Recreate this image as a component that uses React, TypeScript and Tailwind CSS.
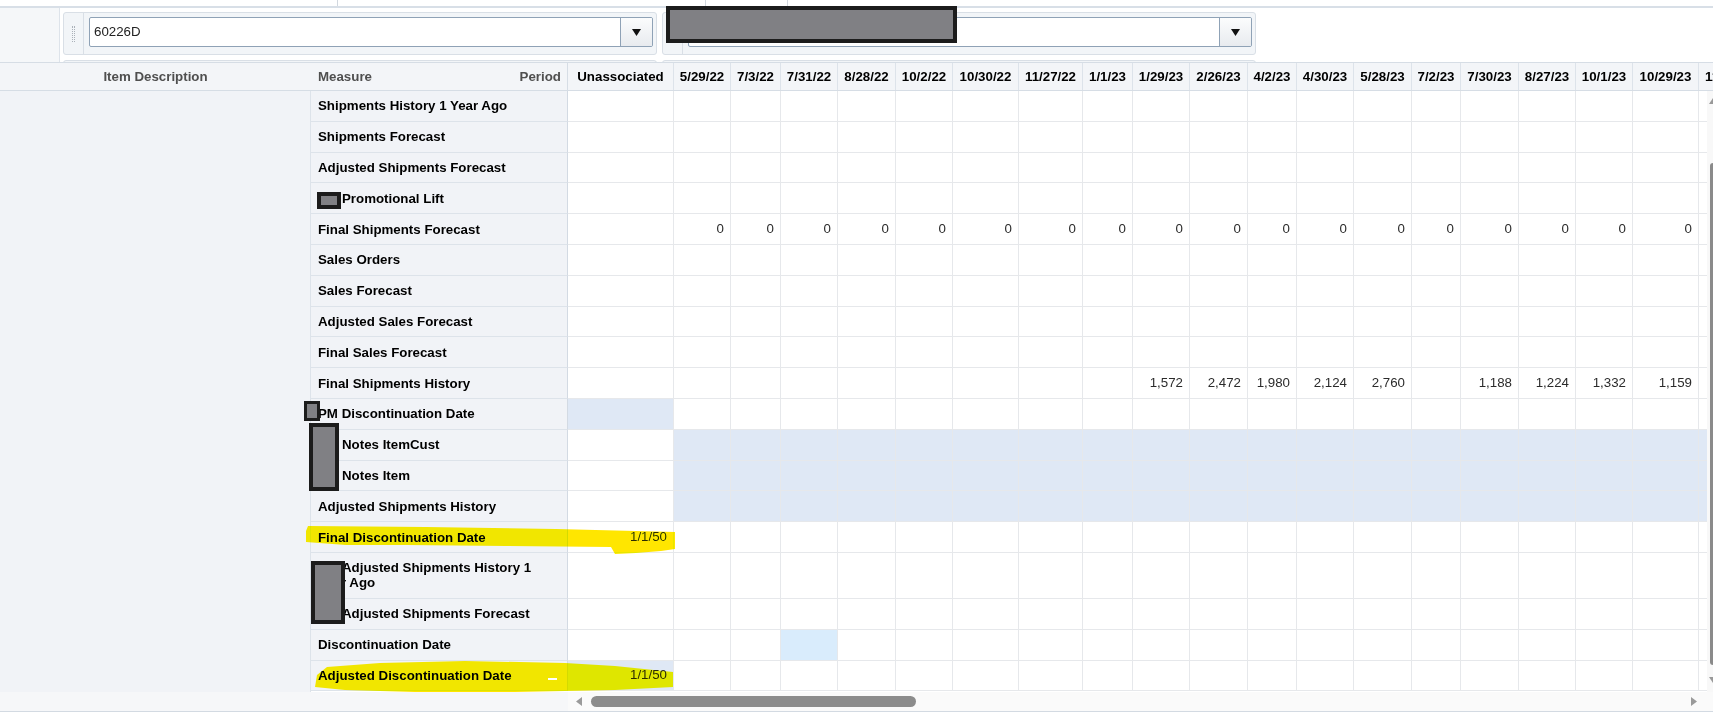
import clsx from 'clsx';

type Col = { label: string; w: string };

// period columns of the grid; the last one runs off the right edge
const COLS: Col[] = [
  { label: 'Unassociated', w: 'w-[106px]' },
  { label: '5/29/22', w: 'w-[57px]' },
  { label: '7/3/22', w: 'w-[50px]' },
  { label: '7/31/22', w: 'w-[57px]' },
  { label: '8/28/22', w: 'w-[58px]' },
  { label: '10/2/22', w: 'w-[57px]' },
  { label: '10/30/22', w: 'w-[66px]' },
  { label: '11/27/22', w: 'w-[64px]' },
  { label: '1/1/23', w: 'w-[50px]' },
  { label: '1/29/23', w: 'w-[57px]' },
  { label: '2/26/23', w: 'w-[58px]' },
  { label: '4/2/23', w: 'w-[49px]' },
  { label: '4/30/23', w: 'w-[57px]' },
  { label: '5/28/23', w: 'w-[58px]' },
  { label: '7/2/23', w: 'w-[49px]' },
  { label: '7/30/23', w: 'w-[58px]' },
  { label: '8/27/23', w: 'w-[57px]' },
  { label: '10/1/23', w: 'w-[57px]' },
  { label: '10/29/23', w: 'w-[66px]' },
  { label: '11/26/23', w: 'w-[64px]' },
];

type Row = {
  label: string;
  indent?: boolean;
  tall?: boolean;
  values?: Record<number, string>;
  // which cells carry the read-only tint
  tint?: 'unassoc' | 'periods';
  // index of the focused cell
  picked?: number;
};

const zeros: Record<number, string> = {};
for (let i = 1; i <= 18; i++) zeros[i] = '0';

const ROWS: Row[] = [
  { label: 'Shipments History 1 Year Ago' },
  { label: 'Shipments Forecast' },
  { label: 'Adjusted Shipments Forecast' },
  { label: 'Promotional Lift', indent: true },
  { label: 'Final Shipments Forecast', values: zeros },
  { label: 'Sales Orders' },
  { label: 'Sales Forecast' },
  { label: 'Adjusted Sales Forecast' },
  { label: 'Final Sales Forecast' },
  {
    label: 'Final Shipments History',
    values: { 9: '1,572', 10: '2,472', 11: '1,980', 12: '2,124', 13: '2,760', 15: '1,188', 16: '1,224', 17: '1,332', 18: '1,159' },
  },
  { label: 'PM Discontinuation Date', tint: 'unassoc' },
  { label: 'Notes ItemCust', indent: true, tint: 'periods' },
  { label: 'Notes Item', indent: true, tint: 'periods' },
  { label: 'Adjusted Shipments History', tint: 'periods' },
  { label: 'Final Discontinuation Date', values: { 0: '1/1/50' } },
  { label: 'Adjusted Shipments History 1 Year Ago', indent: true, tall: true },
  { label: 'Adjusted Shipments Forecast', indent: true },
  { label: 'Discontinuation Date', picked: 3 },
  { label: 'Adjusted Discontinuation Date', values: { 0: '1/1/50' }, tint: 'unassoc' },
];

function DownTriangle() {
  return (
    <svg width="9" height="7" viewBox="0 0 9 7">
      <polygon points="0,0 9,0 4.5,7" fill="#111" />
    </svg>
  );
}

function FilterBox({ value }: { value?: string }) {
  return (
    <div className="w-[594px] h-[43px] shrink-0 flex border border-[#d9dfe6] rounded-[3px] bg-[#f2f5f8]">
      <div className="w-[20px] shrink-0 border-r border-[#d9dfe6] flex items-center justify-center">
        <div className="w-[3px] h-[16px] border-x border-dotted border-[#aab1b9]" />
      </div>
      <div className="flex-1 pl-[5px] pr-[3px] pt-[4px]">
        <div className="h-[30px] flex border border-[#8fa2b6] rounded-[2px] bg-white overflow-hidden">
          <span className="flex-1 pl-[4px] text-[13.3px] leading-[28px] text-[#222]">{value}</span>
          <div className="w-[32px] shrink-0 border-l border-[#8fa2b6] bg-gradient-to-b from-[#fbfcfd] to-[#e8ebef] flex items-center justify-center">
            <DownTriangle />
          </div>
        </div>
      </div>
    </div>
  );
}

function Toolbar() {
  return (
    <div className="h-[54px] flex overflow-hidden">
      <div className="w-[60px] shrink-0 bg-[#f5f7f9] border-r border-[#dde3ea]" />
      <div className="flex flex-col pl-[3px] pt-[4px] gap-[5px]">
        <div className="flex gap-[5px]">
          <FilterBox value="60226D" />
          <FilterBox />
        </div>
        <div className="flex gap-[5px]">
          <div className="w-[594px] h-[20px] border border-[#d9dfe6] rounded-[3px] bg-[#f2f5f8]" />
          <div className="w-[594px] h-[20px] border border-[#d9dfe6] rounded-[3px] bg-[#f2f5f8]" />
        </div>
      </div>
    </div>
  );
}

function HeaderRow() {
  return (
    <div className="h-[29px] flex bg-[#f3f5f8] border-y border-[#d6dde5] overflow-hidden text-[13.3px] font-bold">
      <div className="w-[311px] shrink-0 flex items-center justify-center text-[#4f4f4f]">Item Description</div>
      <div className="w-[257px] shrink-0 flex items-center justify-between pl-[7px] pr-[6px] text-[#4f4f4f] border-r border-[#d6dde5]">
        <span>Measure</span>
        <span>Period</span>
      </div>
      {COLS.map((c) => (
        <div
          key={c.label}
          className={clsx(c.w, 'shrink-0 flex items-center justify-center border-r border-[#dde3ea] text-black whitespace-nowrap')}
        >
          {c.label}
        </div>
      ))}
    </div>
  );
}

function DataRow({ row }: { row: Row }) {
  return (
    <div className={clsx('flex shrink-0', row.tall ? 'h-[46px]' : 'h-[30.8px]')}>
      <div
        className={clsx(
          'w-[257px] shrink-0 flex items-center bg-[#f1f3f7] border-b border-r border-b-[#dde3ea] border-r-[#d3dae3] pr-[10px] text-[13.3px] font-bold text-black leading-[15px]',
          row.tall ? 'pl-[7px] indent-[24px]' : row.indent ? 'pl-[31px]' : 'pl-[7px]'
        )}
      >
        <span>{row.label}</span>
      </div>
      {COLS.map((c, i) => {
        const tinted = (row.tint === 'unassoc' && i === 0) || (row.tint === 'periods' && i > 0);
        return (
          <div
            key={c.label}
            className={clsx(
              c.w,
              'shrink-0 flex items-center justify-end pr-[6px] border-r border-b border-[#e6e8eb] text-[13.3px] text-[#2b2b2b] whitespace-nowrap',
              row.picked === i ? 'bg-[#d9ecfc]' : tinted ? 'bg-[#dfe8f5]' : 'bg-white'
            )}
          >
            {row.values?.[i]}
          </div>
        );
      })}
    </div>
  );
}

function Redacted({ className }: { className: string }) {
  return <div className={clsx('absolute bg-[#808084] border-[#1c1c1c]', className)} />;
}

export default function App() {
  return (
    <div className="relative w-[1713px] h-[716px] overflow-hidden bg-white font-['Liberation_Sans',Arial,sans-serif]">
      {/* tab strip remnant */}
      <div className="h-[8px] flex border-b-2 border-[#d8dfe7]">
        <div className="w-[338px] border-r border-[#d2d8df]" />
        <div className="w-[368px] border-r border-[#d2d8df]" />
        <div className="w-[82px] border-r border-[#d2d8df]" />
      </div>

      <Toolbar />

      <div className="flex flex-col">
        <HeaderRow />
        <div className="flex h-[601px]">
          <div className="w-[311px] shrink-0 bg-[#f1f3f7] border-r border-[#dde3ea]" />
          <div className="flex-1 min-w-0 overflow-hidden flex flex-col">
            {ROWS.map((r) => (
              <DataRow key={r.label + (r.tall ? '-wrap' : '')} row={r} />
            ))}
          </div>
          {/* vertical scrollbar, mostly off screen */}
          <div className="w-[6px] shrink-0 bg-[#f8f8f8] flex flex-col items-end">
            <svg width="4" height="6" viewBox="0 0 4 6" className="mt-[7px]">
              <polygon points="4,0 4,6 0,6" fill="#999" />
            </svg>
            <div className="mt-[59px] w-[3px] h-[502px] rounded-l-[3px] bg-[#8a8a8a]" />
            <svg width="4" height="6" viewBox="0 0 4 6" className="mt-[12px]">
              <polygon points="0,0 4,0 4,6" fill="#999" />
            </svg>
          </div>
        </div>

        {/* horizontal scrollbar */}
        <div className="h-[20px] flex border-b border-[#d3dae2]">
          <div className="w-[568px] shrink-0 bg-[#f6f7f9]" />
          <div className="flex-1 flex items-center bg-[#fafafa]">
            <svg width="6" height="9" viewBox="0 0 6 9" className="ml-[8px]">
              <polygon points="6,0 6,9 0,4.5" fill="#9a9a9a" />
            </svg>
            <div className="ml-[9px] w-[325px] h-[11px] rounded-full bg-[#8c8c8c]" />
            <svg width="6" height="9" viewBox="0 0 6 9" className="ml-auto mr-[16px]">
              <polygon points="0,0 6,4.5 0,9" fill="#9a9a9a" />
            </svg>
          </div>
        </div>
      </div>

      {/* highlighter strokes */}
      <div className="absolute left-[306px] top-[525px] w-[369px] h-[29px] bg-[#ffe600] mix-blend-darken [clip-path:polygon(2px_1px,120px_2px,250px_4px,369px_7px,369px_24px,355px_26px,330px_28px,309px_29px,305px_22px,200px_21px,100px_20px,40px_20px,0px_17px,0px_6px)]" />
      <div className="absolute left-[315px] top-[661px] w-[358px] h-[32px] bg-[#ffe600] mix-blend-darken [clip-path:polygon(2px_14px,12px_6px,65px_2px,150px_0px,250px_2px,300px_5px,358px_11px,358px_26px,300px_29px,200px_31px,100px_31px,30px_29px,0px_26px)]" />
      <div className="absolute left-[548px] top-[678px] w-[9px] h-[2px] bg-white" />

      {/* masked fields */}
      <Redacted className="left-[666px] top-[6px] w-[291px] h-[37px] border-[4px]" />
      <Redacted className="left-[317px] top-[192px] w-[24px] h-[17px] border-[4px]" />
      <Redacted className="left-[304px] top-[401px] w-[16px] h-[20px] border-[3px]" />
      <Redacted className="left-[309px] top-[423px] w-[30px] h-[68px] border-[4px]" />
      <Redacted className="left-[311px] top-[561px] w-[34px] h-[63px] border-[4px]" />
    </div>
  );
}
